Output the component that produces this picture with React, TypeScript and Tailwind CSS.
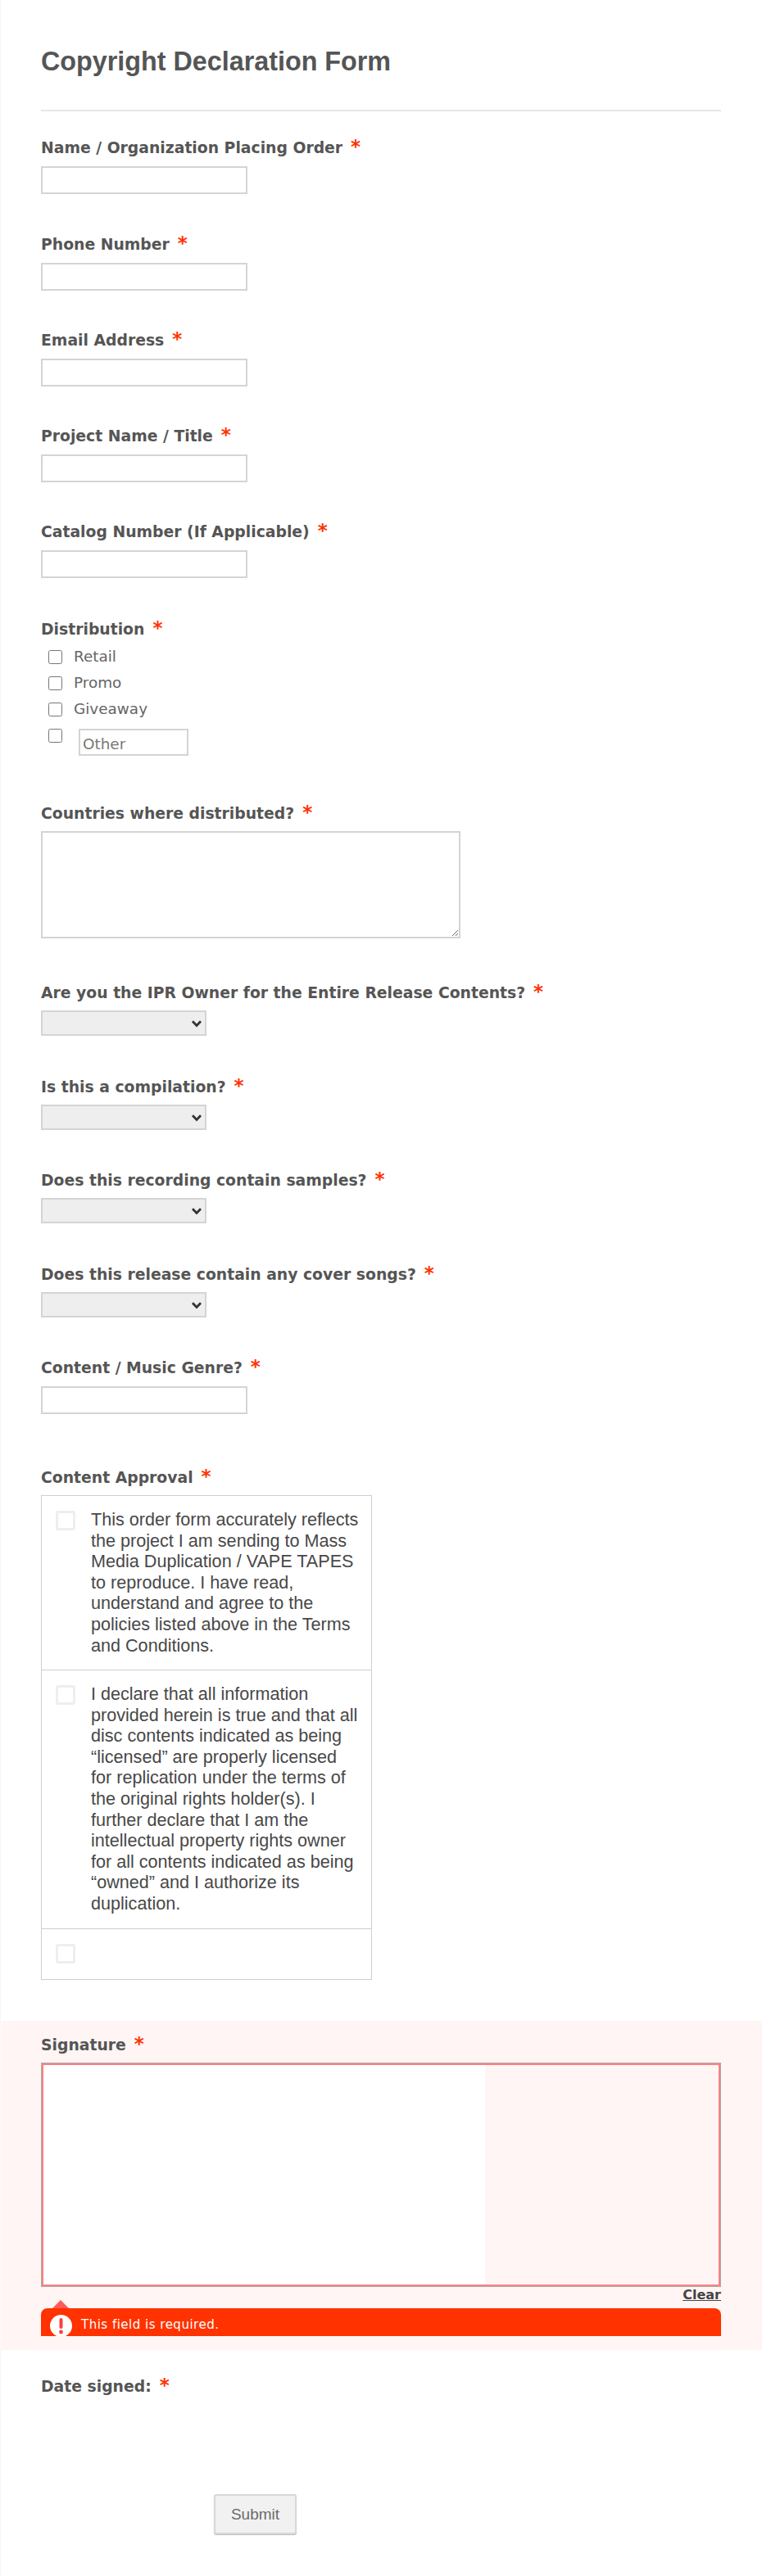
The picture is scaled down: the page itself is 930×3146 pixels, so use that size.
import React from "react";

const labelCls = "block h-5 text-[18.8px] leading-5 font-bold text-[#555] [font-family:'DejaVu_Sans',sans-serif] whitespace-nowrap";
const inputCls = "block bg-white border-2 border-[#d4d4d4] outline-none";

function Label({ text, className = "" }: { text: string; className?: string }) {
  return (
    <label className={`${labelCls} ${className}`}>
      {text}
      <span className="ml-[10px] text-[23px] text-[#ff3200]">*</span>
    </label>
  );
}

function TextField({ text, className }: { text: string; className: string }) {
  return (
    <div className={className}>
      <Label text={text} />
      <input type="text" className={`${inputCls} mt-[14px] h-[34px] w-[252px]`} />
    </div>
  );
}

function SelectField({ text, className }: { text: string; className: string }) {
  return (
    <div className={className}>
      <Label text={text} />
      <div className="relative mt-[13px] h-[31px] w-[202px]">
        <select className="block h-full w-full appearance-none bg-[#eeeeee] border-2 border-[#d4d4d4] text-[#333] outline-none">
          <option></option>
        </select>
        <svg viewBox="0 0 14 10" className="pointer-events-none absolute right-[5px] top-[11px] h-[10px] w-[14px]">
          <path d="M2 2.2 7 7.4 12 2.2" fill="none" stroke="#333" strokeWidth="2.8" />
        </svg>
      </div>
    </div>
  );
}

function Check({ text }: { text: string }) {
  return (
    <div className="flex h-8 items-center">
      <input type="checkbox" className="m-0 ml-[9px] h-[17px] w-[17px]" />
      <span className="ml-[14px] text-[18.4px] text-[#666] [font-family:'DejaVu_Sans',sans-serif]">{text}</span>
    </div>
  );
}

function Row({ lines, className }: { lines?: string; className: string }) {
  return (
    <div className={`flex border-b border-[#cfcfcf] pl-[17px] last:border-b-0 ${className}`}>
      <input type="checkbox" className="appearance-none mt-[18px] h-6 w-6 shrink-0 rounded-[3px] border-[3px] border-[#eeeeee] bg-white" />
      {lines && (
        <p className="ml-[19px] w-[328px] pt-[16px] text-[21.6px] leading-[25.6px] text-[#484848] [font-family:'Liberation_Sans',sans-serif]">
          {lines}
        </p>
      )}
    </div>
  );
}

export default function App() {
  return (
    <div className="relative h-[3146px] w-[930px] bg-white">
      <div className="absolute left-0 top-0 h-full w-px bg-[#fdf3f3]" />
      <div className="px-[50px] pt-[57px]">
        <h1 className="h-9 text-[32.3px] leading-9 font-bold text-[#555] [font-family:'Liberation_Sans',sans-serif]">
          Copyright Declaration Form
        </h1>
        <div className="mt-[41px] h-[2px] w-[830px] bg-[#e6e6e6]" />

        <TextField text="Name / Organization Placing Order" className="mt-[33px]" />
        <TextField text="Phone Number" className="mt-[50px]" />
        <TextField text="Email Address" className="mt-[49px]" />
        <TextField text="Project Name / Title" className="mt-[49px]" />
        <TextField text="Catalog Number (If Applicable)" className="mt-[49px]" />

        <div className="mt-[51px]">
          <Label text="Distribution" />
          <div className="mt-[9px]">
            <Check text="Retail" />
            <Check text="Promo" />
            <Check text="Giveaway" />
            <div className="mt-[8px] flex items-start">
              <input type="checkbox" className="m-0 ml-[9px] h-[17px] w-[17px] shrink-0" />
              <input
                type="text"
                placeholder="Other"
                className={`${inputCls} ml-[20px] h-[33px] w-[134px] px-[3px] pt-[3px] text-[18.4px] text-[#666] placeholder:text-[#777] [font-family:'DejaVu_Sans',sans-serif]`}
              />
            </div>
          </div>
        </div>

        <div className="mt-[59px]">
          <Label text="Countries where distributed?" />
          <textarea className={`${inputCls} mt-[13px] h-[131px] w-[512px]`} />
        </div>

        <SelectField text="Are you the IPR Owner for the Entire Release Contents?" className="mt-[55px]" />
        <SelectField text="Is this a compilation?" className="mt-[51px]" />
        <SelectField text="Does this recording contain samples?" className="mt-[50px]" />
        <SelectField text="Does this release contain any cover songs?" className="mt-[51px]" />

        <TextField text="Content / Music Genre?" className="mt-[50px]" />

        <div className="mt-[66px]">
          <Label text="Content Approval" />
          <div className="mt-[13px] w-[404px] border border-[#cfcfcf]">
            <Row
              className="h-[213px]"
              lines="This order form accurately reflects the project I am sending to Mass Media Duplication / VAPE TAPES to reproduce. I have read, understand and agree to the policies listed above in the Terms and Conditions."
            />
            <Row
              className="h-[316px]"
              lines="I declare that all information provided herein is true and that all disc contents indicated as being “licensed” are properly licensed for replication under the terms of the original rights holder(s). I further declare that I am the intellectual property rights owner for all contents indicated as being “owned” and I authorize its duplication."
            />
            <Row className="h-[61px]" />
          </div>
        </div>
      </div>

      <div className="ml-[2px] mt-[50px] h-[402px] bg-[#fff5f4] pl-[48px] pt-[18px]">
        <Label text="Signature" />
        <div className="mt-[13px] h-[274px] w-[830px] border border-[#aaaaaa]">
          <div className="h-full border-2 border-[#ff8082]">
            <div className="h-full w-[539px] bg-white" />
          </div>
        </div>
        <div className="flex w-[830px] justify-end">
          <a className="text-[16px] leading-[20px] font-bold text-[#444] underline [font-family:'DejaVu_Sans',sans-serif]">Clear</a>
        </div>
        <div className="relative mt-[6px] w-[830px]">
          <div className="absolute -top-[10px] left-[14px] h-0 w-0 border-x-[10px] border-b-[10px] border-x-transparent border-b-[#ff5a5a]" />
          <div className="flex h-[34px] items-start overflow-hidden rounded-t-[8px] bg-[#ff3200] pl-[11px] pt-[8px]">
            <svg viewBox="0 0 27 27" className="h-[27px] w-[27px] shrink-0">
              <circle cx="13.5" cy="13.5" r="13.5" fill="#fff" />
              <rect x="11.5" y="4" width="4" height="13" rx="2" fill="#ff3d3d" />
              <circle cx="13.5" cy="21" r="2.4" fill="#ff3d3d" />
            </svg>
            <span className="ml-[11px] mt-[2px] text-[15px] leading-[20px] tracking-[0.5px] text-white [font-family:'DejaVu_Sans',sans-serif]">
              This field is required.
            </span>
          </div>
        </div>
      </div>

      <div className="px-[50px]">
        <Label text="Date signed:" className="mt-[33px]" />
        <button className="ml-[211px] mt-[123px] block h-[49px] w-[101px] rounded-[3px] border-2 border-[#d8d8d8] bg-[#f1f1f1] pt-[2px] text-[19px] text-[#6a6a6a] shadow-[0_1px_1px_#bbb] [font-family:'Liberation_Sans',sans-serif]">
          Submit
        </button>
      </div>
    </div>
  );
}
